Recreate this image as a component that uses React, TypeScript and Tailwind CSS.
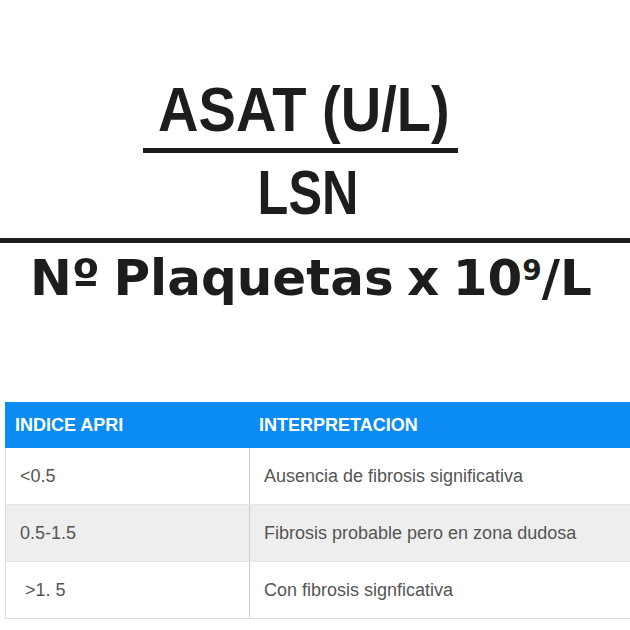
import React from "react";

const rows = [
  { a: "<0.5", b: "Ausencia de fibrosis significativa", bg: "bg-white" },
  { a: "0.5-1.5", b: "Fibrosis probable pero en zona dudosa", bg: "bg-[#eeeeee]" },
  { a: "\u00a0>1. 5", b: "Con fibrosis signficativa", bg: "bg-white" },
];

export default function App() {
  return (
    <div className="w-[630px] h-[630px] bg-white overflow-hidden relative">
      {/* Formula */}
      <div className="pt-[78px] flex flex-col items-center text-[#1d1d1b]">
        <div className="flex flex-col items-center w-[315px] ml-[-30px]">
          <div
            className="block ml-[8px] text-[63px] leading-[63px] font-bold scale-x-[0.89] whitespace-nowrap"
            style={{ fontFamily: '"Liberation Sans", Arial, sans-serif' }}
          >
            ASAT (U/L)
          </div>
          <div className="mt-[7px] h-[5px] w-[315px] bg-[#1d1d1b]" />
          <div
            className="block mt-[8px] ml-[16px] text-[63px] leading-[63px] font-bold scale-x-[0.8] whitespace-nowrap"
            style={{ fontFamily: '"Liberation Sans", Arial, sans-serif' }}
          >
            LSN
          </div>
        </div>
      </div>
      <div className="mt-[14px] h-[5px] w-full bg-[#1d1d1b]" />
      <div
        className="mt-[7px] pl-[30px] text-[50px] leading-[56px] font-bold whitespace-nowrap text-[#1d1d1b]"
        style={{ fontFamily: '"DejaVu Sans", sans-serif', wordSpacing: "-4px" }}
      >
        Nº Plaquetas x 10<sup className="text-[28px] relative top-[-15px] align-baseline">9</sup>/L
      </div>

      {/* Table */}
      <div
        className="absolute left-[5px] top-[402px] w-[625px]"
        style={{ fontFamily: '"Liberation Sans", Arial, sans-serif' }}
      >
        <div className="flex h-[46px] bg-[#0a8cf4] text-white font-bold text-[18px] items-center">
          <div className="w-[245px] pl-[10px]">INDICE APRI</div>
          <div className="flex-1 pl-[9px]">INTERPRETACION</div>
        </div>
        {rows.map((r, i) => (
          <div
            key={i}
            className={`flex h-[57px] ${r.bg} text-[#555555] text-[18px] border-l border-[#dddddd] ${i < rows.length - 1 ? "border-b border-b-[#e6e6e6]" : "border-b border-b-[#dddddd]"}`}
          >
            <div className="w-[244px] pl-[14px] flex items-center border-r border-[#cccccc] whitespace-pre">
              {r.a}
            </div>
            <div className="flex-1 pl-[14px] flex items-center">{r.b}</div>
          </div>
        ))}
      </div>
    </div>
  );
}
